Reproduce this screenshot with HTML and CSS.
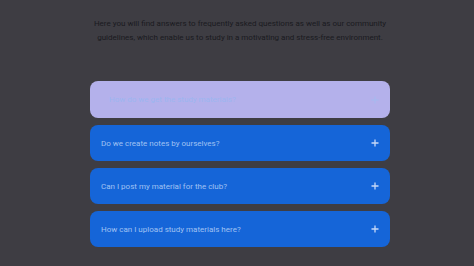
FILE: index.html
```html
<!DOCTYPE html>
<html>
<head>
<meta charset="utf-8">
<link rel="stylesheet" href="styles.css">
</head>
<body>
<main class="faq">
  <p class="intro">Here you will find answers to frequently asked questions as well as our community guidelines, which enable us to study in a motivating and stress-free environment.</p>
  <div class="list">
    <div class="item active"><span class="q">How do we get the study materials?</span><svg class="plus" viewBox="0 0 8 8"><path d="M4 0.5V7.5M0.5 4H7.5"/></svg></div>
    <div class="item"><span class="q">Do we create notes by ourselves?</span><svg class="plus" viewBox="0 0 8 8"><path d="M4 0.5V7.5M0.5 4H7.5"/></svg></div>
    <div class="item"><span class="q">Can I post my material for the club?</span><svg class="plus" viewBox="0 0 8 8"><path d="M4 0.5V7.5M0.5 4H7.5"/></svg></div>
    <div class="item"><span class="q">How can I upload study materials here?</span><svg class="plus" viewBox="0 0 8 8"><path d="M4 0.5V7.5M0.5 4H7.5"/></svg></div>
  </div>
</main>
</body>
</html>
```
FILE: styles.css
```css
html, body { margin: 0; padding: 0; }
body {
  background: #3e3d43;
  font-family: Roboto, "Liberation Sans", sans-serif;
  width: 474px;
  height: 266px;
  overflow: hidden;
}
.faq {
  display: flex;
  flex-direction: column;
  align-items: center;
  padding-top: 17px;
  padding-left: 6px;
}
.intro {
  margin: 0;
  width: 330px;
  text-align: center;
  font-size: 8px;
  line-height: 13.5px;
  color: #1a1a20;
}
.list {
  margin-top: 37px;
  width: 300px;
  display: flex;
  flex-direction: column;
  gap: 7px;
}
.item {
  height: 36px;
  box-sizing: border-box;
  border-radius: 8px;
  background: #1565d8;
  display: flex;
  align-items: center;
  justify-content: space-between;
  padding: 0 11px;
  color: #a0c2f3;
  font-size: 8px;
}
.item.active {
  height: 37px;
  background: #b4b1eb;
  color: #9cb6f0;
  padding-left: 19px;
}
.plus {
  width: 8px;
  height: 8px;
  fill: none;
  stroke: #c6d8f7;
  stroke-width: 1.3;
}
.item.active .plus { stroke: #a8b8ee; }
```
